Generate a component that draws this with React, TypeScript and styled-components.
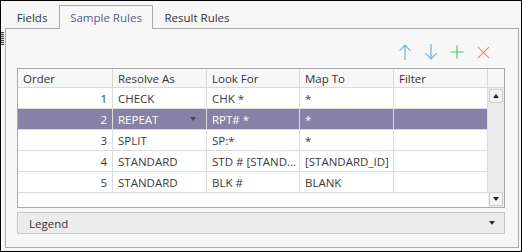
import React from "react";
import styled, { createGlobalStyle } from "styled-components";

const GlobalStyle = createGlobalStyle`
  html, body { margin: 0; padding: 0; background: #ffffff; }
  * { box-sizing: border-box; }
`;

const Window = styled.div`
  width: 522px;
  height: 252px;
  border: 1px solid #000;
  background: #f7f7f7;
  display: flex;
  flex-direction: column;
  font-family: "Open Sans", "Noto Sans", sans-serif;
  font-size: 11.5px;
  color: #333;
`;

const TabStrip = styled.div`
  flex: none;
  height: 27px;
  display: flex;
  align-items: flex-end;
  padding-left: 4px;
`;

const Tab = styled.div<{ $active?: boolean; $w: number }>`
  width: ${(p) => p.$w}px;
  height: ${(p) => (p.$active ? 24 : 23)}px;
  display: flex;
  align-items: center;
  justify-content: center;
  white-space: nowrap;
  color: ${(p) => (p.$active ? "#5d5794" : "#333")};
  padding-top: ${(p) => (p.$active ? 0 : 1)}px;
  ${(p) =>
    p.$active
      ? `
    border: 1px solid #acacac;
    border-bottom: none;
    background: #f7f7f7;
    margin-bottom: -1px;
    position: relative;
    z-index: 1;
  `
      : ""}
`;

const Body = styled.div`
  flex: 1;
  min-height: 0;
  display: flex;
`;

const Grip = styled.div`
  width: 3px;
  height: 13px;
  margin: 4px 1px 0 0;
  background: repeating-linear-gradient(to bottom, #444 0 1px, #d8d8d8 1px 2px);
`;

const Panel = styled.div`
  flex: 1;
  display: flex;
  flex-direction: column;
  border: 1px solid #acacac;
  margin: 0 2px 3px 0;
  padding: 0 13px 13px 11px;
`;

const Toolbar = styled.div`
  flex: none;
  height: 39px;
  display: flex;
  justify-content: flex-end;
  align-items: flex-start;
  padding: 15px 9px 0 0;
`;

const IconButton = styled.div`
  width: 26px;
  height: 16px;
  display: flex;
  align-items: center;
  justify-content: center;
`;

const Grid = styled.div`
  flex: none;
  height: 140px;
  border: 1px solid #a9a9a9;
  background: #fff;
  display: flex;
  flex-direction: column;
`;

const HeaderRow = styled.div`
  flex: none;
  height: 19px;
  display: flex;
  background: #f7f7f7;
  border-bottom: 1px solid #d9d9d9;
`;

const widths = [95, 94, 93, 94, 94];

const HeaderCell = styled.div<{ $w: number; $last?: boolean }>`
  width: ${(p) => p.$w}px;
  flex: none;
  border-right: ${(p) => (p.$last ? "none" : "1px solid #d9d9d9")};
  padding-left: 5px;
  display: flex;
  align-items: center;
  white-space: nowrap;
`;

const GridBody = styled.div`
  flex: 1;
  display: flex;
  min-height: 0;
`;

const Rows = styled.div`
  flex: 1;
  display: flex;
  flex-direction: column;
`;

const Row = styled.div<{ $selected?: boolean }>`
  height: 21px;
  flex: none;
  display: flex;
  border-bottom: 1px solid #dcdcdc;
  background: ${(p) => (p.$selected ? "#8781a5" : "#fff")};
  color: ${(p) => (p.$selected ? "#fff" : "#3a3a3a")};
`;

const Cell = styled.div<{ $w: number; $right?: boolean }>`
  width: ${(p) => p.$w}px;
  flex: none;
  border-right: 1px solid #dcdcdc;
  display: flex;
  align-items: center;
  justify-content: ${(p) => (p.$right ? "flex-end" : "space-between")};
  padding: 0 ${(p) => (p.$right ? 5 : 10)}px 0 5px;
  white-space: nowrap;
  overflow: hidden;
`;

const DropCaret = styled.span<{ $color: string }>`
  width: 0;
  height: 0;
  border-left: 3.5px solid transparent;
  border-right: 3.5px solid transparent;
  border-top: 4px solid ${(p) => p.$color};
`;

const ScrollBar = styled.div`
  width: 16px;
  flex: none;
  background: #ececec;
  display: flex;
  flex-direction: column;
  justify-content: space-between;
  padding: 1px 1px 1px 1px;
`;

const ScrollButton = styled.div`
  width: 14px;
  height: 14px;
  border: 1px solid #cfcfcf;
  background: #f3f3f3;
  display: flex;
  align-items: center;
  justify-content: center;
`;

const ScrollArrow = styled.span<{ $up?: boolean }>`
  width: 0;
  height: 0;
  border-left: 3px solid transparent;
  border-right: 3px solid transparent;
  ${(p) => (p.$up ? "border-bottom: 4px solid #222;" : "border-top: 4px solid #222;")}
`;

const Legend = styled.div`
  flex: none;
  margin-top: 4px;
  height: 22px;
  border: 1px solid #c6c6c6;
  background: #ececec;
  display: flex;
  align-items: center;
  justify-content: space-between;
  padding: 0 9px 0 11px;
`;

const rows = [
  ["1", "CHECK", "CHK *", "*", ""],
  ["2", "REPEAT", "RPT# *", "*", ""],
  ["3", "SPLIT", "SP:*", "*", ""],
  ["4", "STANDARD", "STD # [STAND...", "[STANDARD_ID]", ""],
  ["5", "STANDARD", "BLK #", "BLANK", ""],
];

const headers = ["Order", "Resolve As", "Look For", "Map To", "Filter"];

export default function App() {
  return (
    <>
      <GlobalStyle />
      <Window>
        <TabStrip>
          <Tab $w={54}>Fields</Tab>
          <Tab $w={94} $active>
            Sample Rules
          </Tab>
          <Tab $w={88}>Result Rules</Tab>
        </TabStrip>
        <Body>
          <Grip />
          <Panel>
            <Toolbar>
              <IconButton>
                <svg width="12" height="16" viewBox="0 0 12 16">
                  <path d="M6 1.2V16M0.6 6.6L6 1.2l5.4 5.4" fill="none" stroke="#6fb2e2" strokeWidth="1.2" />
                </svg>
              </IconButton>
              <IconButton>
                <svg width="12" height="16" viewBox="0 0 12 16">
                  <path d="M6 0V14.8M0.6 9.4L6 14.8l5.4-5.4" fill="none" stroke="#6fb2e2" strokeWidth="1.2" />
                </svg>
              </IconButton>
              <IconButton>
                <svg width="14" height="14" viewBox="0 0 14 14">
                  <path d="M7 0.5V13.5M0.5 7H13.5" fill="none" stroke="#55c078" strokeWidth="1.2" />
                </svg>
              </IconButton>
              <IconButton>
                <svg width="13" height="13" viewBox="0 0 13 13">
                  <path d="M0.8 0.8L12.2 12.2M12.2 0.8L0.8 12.2" fill="none" stroke="#f08585" strokeWidth="1.2" />
                </svg>
              </IconButton>
            </Toolbar>
            <Grid>
              <HeaderRow>
                {headers.map((h, i) => (
                  <HeaderCell key={h} $w={widths[i]}>
                    {h}
                  </HeaderCell>
                ))}
                <HeaderCell $w={16} $last />
              </HeaderRow>
              <GridBody>
                <Rows>
                  {rows.map((r, ri) => {
                    const selected = ri === 1;
                    return (
                      <Row key={ri} $selected={selected}>
                        {r.map((v, ci) => (
                          <Cell key={ci} $w={widths[ci]} $right={ci === 0}>
                            <span>{v}</span>
                            {selected && ci === 1 ? <DropCaret $color="#4a4560" /> : null}
                          </Cell>
                        ))}
                      </Row>
                    );
                  })}
                </Rows>
                <ScrollBar>
                  <ScrollButton>
                    <ScrollArrow $up />
                  </ScrollButton>
                  <ScrollButton>
                    <ScrollArrow />
                  </ScrollButton>
                </ScrollBar>
              </GridBody>
            </Grid>
            <Legend>
              <span>Legend</span>
              <DropCaret $color="#333" />
            </Legend>
          </Panel>
        </Body>
      </Window>
    </>
  );
}
